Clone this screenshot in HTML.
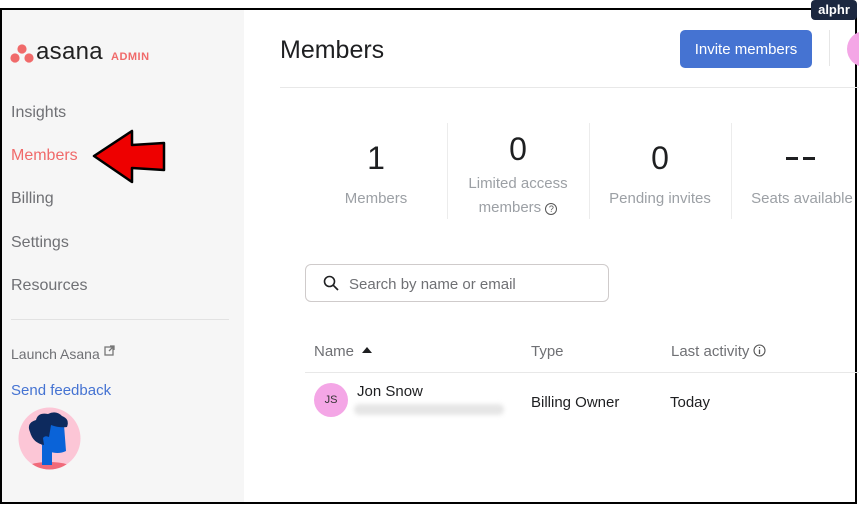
<!DOCTYPE html>
<html><head><style>
*{margin:0;padding:0;box-sizing:border-box}
body{width:859px;height:505px;background:#fff;position:relative;overflow:hidden;font-family:"Liberation Sans",sans-serif;color:#1e1f21}
.a{position:absolute;white-space:nowrap}
.nav{font-size:16px;color:#6f7074;left:11px}
.num{font-size:32px;color:#1e1f21;text-align:center;width:140px}
.lab{font-size:15px;color:#9ca0a5;text-align:center;width:140px;line-height:24px}
.div{position:absolute;top:123px;width:1px;height:96px;background:#ececec}
</style></head><body>
<div class="a" style="left:0;top:8px;width:857px;height:496px;border:2px solid #000"></div>
<div class="a" style="left:2px;top:10px;width:242px;height:492px;background:#f6f6f6"></div>
<svg class="a" style="left:10px;top:44px" width="24" height="20"><circle cx="12" cy="5" r="4.6" fill="#f06a6a"/><circle cx="5" cy="14" r="4.6" fill="#f06a6a"/><circle cx="19" cy="14" r="4.6" fill="#f06a6a"/></svg>
<div class="a" style="left:36px;top:38px;font-size:24px;color:#222;letter-spacing:0.3px">asana</div>
<div class="a" style="left:111px;top:51px;font-size:11px;color:#f06a6a;font-weight:bold;letter-spacing:0.5px">ADMIN</div>
<div class="a nav" style="top:104px">Insights</div>
<div class="a nav" style="top:147px;color:#f06a6a">Members</div>
<div class="a nav" style="top:190px">Billing</div>
<div class="a nav" style="top:234px">Settings</div>
<div class="a nav" style="top:277px">Resources</div>
<svg class="a" style="left:92px;top:128px" width="76" height="58"><path d="M2 28 L40 3 L40 17 L72 15 L72 42 L40 40 L40 54 Z" fill="#e00" stroke="#000" stroke-width="2.5" stroke-linejoin="round"/></svg>
<div class="a" style="left:11px;top:319px;width:218px;height:1px;background:#e2e2e2"></div>
<div class="a" style="left:11px;top:346px;font-size:14px;color:#6f7074">Launch Asana</div>
<svg class="a" style="left:104px;top:345px" width="11" height="11"><rect x="1" y="2" width="8" height="8" fill="none" stroke="#777" stroke-width="1.3"/><path d="M5 6 L10 1 M6 1 H10 V5" stroke="#777" stroke-width="1.3" fill="none"/></svg>
<div class="a" style="left:11px;top:382px;font-size:15px;color:#4573d2">Send feedback</div>
<svg class="a" style="left:18px;top:407px" width="63" height="63"><defs><clipPath id="c"><circle cx="31.5" cy="31.5" r="31"/></clipPath></defs><circle cx="31.5" cy="31.5" r="31" fill="#fcc6d6"/><g clip-path="url(#c)"><ellipse cx="31" cy="62" rx="24" ry="7" fill="#f06a7a"/><rect x="24" y="36" width="10" height="22" fill="#0a63d8"/><path d="M22 18 L46 18 L48 44 Q40 48 30 44 L22 36 Z" fill="#0a63d8"/><path d="M12 25 Q8 16 18 13 Q20 5 30 7 Q38 3 44 9 Q52 12 49 20 Q41 21 33 18 L31 30 Q27 28 25 31 L26 38 Q15 36 12 25 Z" fill="#0d2a5e"/></g></svg>
<div class="a" style="left:280px;top:36px;font-size:25px;color:#1e1f21">Members</div>
<div class="a" style="left:680px;top:30px;width:132px;height:38px;background:#4573d2;border-radius:5px;color:#fff;font-size:15px;text-align:center;line-height:39px">Invite members</div>
<div class="a" style="left:829px;top:30px;width:1px;height:36px;background:#e6e6e6"></div>
<div class="a" style="left:847px;top:31px;width:36px;height:36px;border-radius:50%;background:#f4a6e6"></div>
<div class="a" style="left:280px;top:87px;width:579px;height:1px;background:#e8e8e8"></div>
<div class="a" style="left:811px;top:0;width:46px;height:20px;background:#1c2840;border-radius:4px;color:#fff;font-size:13px;font-weight:bold;text-align:center;line-height:19px">alphr</div>
<div class="a num" style="left:306px;top:140px">1</div>
<div class="a lab" style="left:306px;top:187px">Members</div>
<div class="div" style="left:447px"></div>
<div class="a num" style="left:448px;top:131px">0</div>
<div class="a lab" style="left:448px;top:172px">Limited access<br>members <span style="color:#555;border:1px solid #555;border-radius:50%;display:inline-block;width:12px;height:12px;line-height:11px;font-size:9px">?</span></div>
<div class="div" style="left:589px"></div>
<div class="a num" style="left:590px;top:140px">0</div>
<div class="a lab" style="left:590px;top:187px">Pending invites</div>
<div class="div" style="left:731px"></div>
<div class="a" style="left:786px;top:157px;width:12px;height:3px;background:#1e1f21"></div>
<div class="a" style="left:803px;top:157px;width:12px;height:3px;background:#1e1f21"></div>
<div class="a lab" style="left:732px;top:187px">Seats available</div>
<div class="a" style="left:305px;top:264px;width:304px;height:38px;border:1px solid #cfcbcb;border-radius:6px"></div>
<svg class="a" style="left:323px;top:275px" width="16" height="16"><circle cx="6.5" cy="6.5" r="5" fill="none" stroke="#1e1f21" stroke-width="1.6"/><path d="M10.3 10.3 L15 15" stroke="#1e1f21" stroke-width="1.7"/></svg>
<div class="a" style="left:349px;top:276px;font-size:15px;color:#6f7074">Search by name or email</div>
<div class="a" style="left:314px;top:343px;font-size:15px;color:#6f7074">Name</div>
<svg class="a" style="left:362px;top:347px" width="10" height="6"><path d="M0 6 L5 0 L10 6 Z" fill="#1e1f21"/></svg>
<div class="a" style="left:531px;top:343px;font-size:15px;color:#6f7074">Type</div>
<div class="a" style="left:671px;top:343px;font-size:15px;color:#6f7074">Last activity</div>
<svg class="a" style="left:753px;top:344px" width="13" height="13"><circle cx="6.5" cy="6.5" r="5.5" fill="none" stroke="#555" stroke-width="1.1"/><path d="M6.5 5.5 V10 M6.5 3 V4" stroke="#555" stroke-width="1.3"/></svg>
<div class="a" style="left:305px;top:372px;width:554px;height:1px;background:#e8e8e8"></div>
<div class="a" style="left:314px;top:383px;width:34px;height:34px;border-radius:50%;background:#f4a6e6;font-size:11px;color:#333;text-align:center;line-height:34px">JS</div>
<div class="a" style="left:357px;top:383px;font-size:15px;color:#1e1f21">Jon Snow</div>
<div class="a" style="left:354px;top:404px;width:150px;height:11px;background:#e6e6e6;border-radius:5px;filter:blur(2px)"></div>
<div class="a" style="left:531px;top:394px;font-size:15px;color:#1e1f21">Billing Owner</div>
<div class="a" style="left:670px;top:394px;font-size:15px;color:#1e1f21">Today</div>
</body></html>
